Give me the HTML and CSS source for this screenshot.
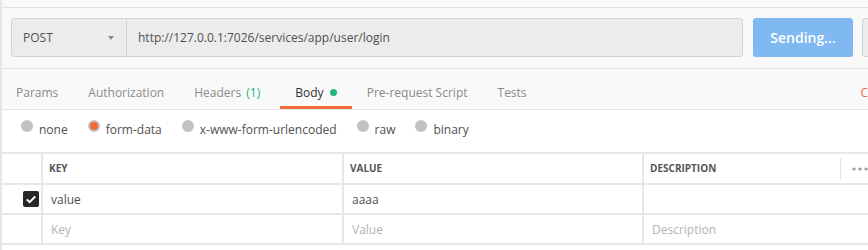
FILE: index.html
```html
<!DOCTYPE html>
<html lang="en">
<head>
    <meta charset="UTF-8">
    <meta name="viewport" content="width=device-width, initial-scale=1.0">
    <title>Request Builder</title>
    <link rel="stylesheet" href="styles.css">
</head>
<body>
    <div class="app">
        <div class="topbar"></div>

        <div class="request-bar">
            <div class="url-group">
                <div class="method">POST <span class="caret"></span></div>
                <div class="url">http://127.0.0.1:7026/services/app/user/login</div>
            </div>
            <button class="send">Sending...</button>
            <button class="save" aria-label="Save"></button>
        </div>

        <div class="tabs">
            <div class="tab">Params</div>
            <div class="tab">Authorization</div>
            <div class="tab">Headers <span class="count">(1)</span></div>
            <div class="tab active">Body <span class="dot"></span></div>
            <div class="tab">Pre-request Script</div>
            <div class="tab">Tests</div>
            <div class="tab-links">Cookies</div>
        </div>

        <div class="body-types">
            <label class="radio"><span class="circle"></span>none</label>
            <label class="radio selected"><span class="circle"></span>form-data</label>
            <label class="radio"><span class="circle"></span>x-www-form-urlencoded</label>
            <label class="radio"><span class="circle"></span>raw</label>
            <label class="radio"><span class="circle"></span>binary</label>
        </div>

        <div class="kv-table">
            <div class="kv-head">
                <div class="cell check-cell"></div>
                <div class="cell">KEY</div>
                <div class="cell">VALUE</div>
                <div class="cell">DESCRIPTION</div>
                <div class="cell more">
                    <svg width="16" height="4" viewBox="0 0 16 4">
                        <circle cx="2" cy="2" r="1.6" fill="#9a9a9a"/>
                        <circle cx="8" cy="2" r="1.6" fill="#9a9a9a"/>
                        <circle cx="14" cy="2" r="1.6" fill="#9a9a9a"/>
                    </svg>
                </div>
            </div>
            <div class="kv-row">
                <div class="cell check-cell">
                    <svg width="16" height="16" viewBox="0 0 16 16">
                        <rect width="16" height="16" rx="2" fill="#282828"/>
                        <path d="M3.8 8.4l2.8 2.7 5.6-5.6" fill="none" stroke="#fff" stroke-width="2"/>
                    </svg>
                </div>
                <div class="cell">value</div>
                <div class="cell">aaaa</div>
                <div class="cell"></div>
            </div>
            <div class="kv-row">
                <div class="cell check-cell"></div>
                <div class="cell placeholder">Key</div>
                <div class="cell placeholder">Value</div>
                <div class="cell placeholder">Description</div>
            </div>
        </div>
    </div>
</body>
</html>
```

FILE: styles.css
```css
html, body {
    overflow: hidden;
}

body {
    margin: 0;
    background: #f9f9f9;
    font-family: "Open Sans", sans-serif;
    font-size: 12px;
    color: #505050;
}

.app {
    width: 960px;
    border-left: 2px solid #e6e6e6;
    min-height: 250px;
    background: #fff;
}

.topbar {
    height: 7px;
    background: #f9f9f9;
    border-bottom: 1px solid #e3e3e3;
}

.request-bar {
    display: flex;
    background: #f9f9f9;
    padding: 10px 0 11px 9px;
    border-bottom: 1px solid #e3e3e3;
}

.url-group {
    display: flex;
    width: 732px;
    height: 39px;
    box-sizing: border-box;
    border: 1px solid #d3d3d3;
    border-radius: 3px;
    background: #ececec;
}

.method {
    width: 115px;
    box-sizing: border-box;
    display: flex;
    align-items: center;
    padding-left: 11px;
    border-right: 1px solid #d3d3d3;
    position: relative;
}

.caret {
    position: absolute;
    left: 96px;
    top: 17px;
    width: 0;
    height: 0;
    border-left: 3.5px solid transparent;
    border-right: 3.5px solid transparent;
    border-top: 4px solid #8a8a8a;
}

.url {
    flex: 1;
    display: flex;
    align-items: center;
    padding-left: 11px;
}

.send {
    margin-left: 10px;
    width: 100px;
    height: 39px;
    border: none;
    border-radius: 3px;
    background: #80b9f1;
    color: #fff;
    font-family: "Open Sans", sans-serif;
    font-size: 14px;
    font-weight: 600;
}

.save {
    margin-left: 9px;
    width: 90px;
    height: 39px;
    border: 1px solid #d3d3d3;
    border-radius: 3px;
    background: #ececec;
}

.tabs {
    display: flex;
    height: 40px;
    background: #f9f9f9;
    border-bottom: 1px solid #e3e3e3;
}

.tab {
    padding: 15px 15px 0;
    line-height: 17px;
    color: #8a8a8a;
    box-sizing: border-box;
    height: 40px;
}

.tab:first-child {
    padding-left: 14px;
}

.tab.active {
    color: #333;
    border-bottom: 3px solid #f26b3a;
}

.count {
    color: #26b47f;
    margin-left: 2px;
    margin-right: 5px;
}

.dot {
    display: inline-block;
    width: 7px;
    height: 7px;
    margin-left: 3px;
    border-radius: 50%;
    background: #26b47f;
    vertical-align: 1px;
}

.tab-links {
    margin-left: 319px;
    padding-top: 15px;
    line-height: 17px;
    color: #f26b3a;
}

.body-types {
    display: flex;
    height: 42px;
    box-sizing: border-box;
    padding: 11px 0 0 19px;
}

.radio {
    display: flex;
    align-items: flex-start;
    line-height: 17px;
    margin-right: 20px;
}

.circle {
    width: 12px;
    height: 12px;
    margin: -1px 6px 0 0;
    border-radius: 50%;
    background: #c2c2c2;
    box-sizing: border-box;
}

.radio.selected .circle {
    border: 2.5px solid #c2c2c2;
    background: #f26b3a;
}

.kv-table {
    border-top: 2px solid #e8e8e8;
}

.kv-head,
.kv-row {
    display: grid;
    border-bottom: 2px solid #e8e8e8;
}

.kv-head {
    grid-template-columns: 39px 301px 300px 198px 1fr;
    height: 29px;
}

.kv-row {
    grid-template-columns: 39px 301px 300px 1fr;
    height: 28px;
}

.cell {
    display: flex;
    align-items: center;
    padding-left: 6px;
    border-left: 2px solid #e8e8e8;
    line-height: 17px;
}

.kv-row .cell {
    padding-left: 8px;
}

.kv-head .cell {
    font-size: 10px;
    font-weight: 700;
    color: #555;
}

.cell.check-cell {
    border-left: none;
    padding: 0 2px 0 0;
    justify-content: flex-end;
}

.kv-head .cell.more {
    border-left: 1px solid #e3e3e3;
    margin: 4px 0 3px;
    padding-left: 11px;
}

.placeholder {
    color: #b3b3b3;
}
```
